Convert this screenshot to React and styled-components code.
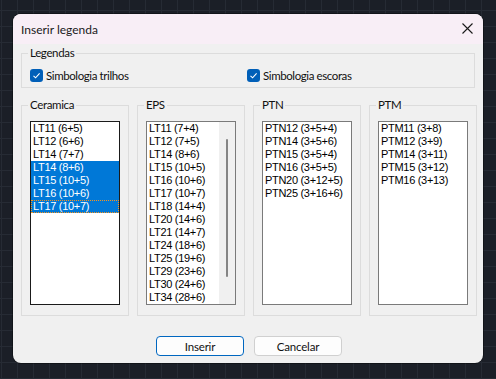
import React from 'react';
import styled, { createGlobalStyle } from 'styled-components';

const GlobalStyle = createGlobalStyle`
  html, body {
    margin: 0;
    padding: 0;
  }
  body {
    width: 496px;
    height: 379px;
    overflow: hidden;
    background-color: #1b1f27;
    background-image:
      linear-gradient(to right, #262b34 1px, transparent 1px),
      linear-gradient(to bottom, #262b34 1px, transparent 1px);
    background-size: 16px 16px;
    background-position: 1px 10px;
    font-family: Lato, "Noto Sans", sans-serif;
  }
`;

const ceramica = [
  { label: 'LT11 (6+5)' },
  { label: 'LT12 (6+6)' },
  { label: 'LT14 (7+7)' },
  { label: 'LT14 (8+6)', selected: true },
  { label: 'LT15 (10+5)', selected: true },
  { label: 'LT16 (10+6)', selected: true },
  { label: 'LT17 (10+7)', selected: true, focus: true },
];

const eps = [
  'LT11 (7+4)', 'LT12 (7+5)', 'LT14 (8+6)', 'LT15 (10+5)', 'LT16 (10+6)',
  'LT17 (10+7)', 'LT18 (14+4)', 'LT20 (14+6)', 'LT21 (14+7)', 'LT24 (18+6)',
  'LT25 (19+6)', 'LT29 (23+6)', 'LT30 (24+6)', 'LT34 (28+6)',
].map(label => ({ label }));

const ptn = [
  'PTN12 (3+5+4)', 'PTN14 (3+5+6)', 'PTN15 (3+5+4)', 'PTN16 (3+5+5)',
  'PTN20 (3+12+5)', 'PTN25 (3+16+6)',
].map(label => ({ label }));

const ptm = [
  'PTM11 (3+8)', 'PTM12 (3+9)', 'PTM14 (3+11)', 'PTM15 (3+12)', 'PTM16 (3+13)',
].map(label => ({ label }));

const App = () => {
  return (
    <>
      <GlobalStyle />
      <Page>
        <Window>
          <TitleBar>
            <span>Inserir legenda</span>
            <svg width="11" height="11" viewBox="0 0 11 11">
              <path d="M0.5 0.5 L10.5 10.5 M10.5 0.5 L0.5 10.5" stroke="#1a1a1a" strokeWidth="1.1" fill="none" />
            </svg>
          </TitleBar>

          <Body>
            <Group $wide>
              <Legend>Legendas</Legend>
              <CheckRow>
                <CheckItem><CheckBox /> Simbologia trilhos</CheckItem>
                <CheckItem><CheckBox /> Simbologia escoras</CheckItem>
              </CheckRow>
            </Group>

            <ListsRow>
              <ListGroup title="Ceramica" items={ceramica} focused />
              <ListGroup title="EPS" items={eps} scroll />
              <ListGroup title="PTN" items={ptn} />
              <ListGroup title="PTM" items={ptm} />
            </ListsRow>

            <Footer>
              <Button $primary>Inserir</Button>
              <Button>Cancelar</Button>
            </Footer>
          </Body>
        </Window>
      </Page>
    </>
  );
};

const CheckBox = () => (
  <Box>
    <svg width="9" height="9" viewBox="0 0 9 9">
      <path d="M1.5 4.8 L3.6 6.8 L7.6 2.4" stroke="#fff" strokeWidth="1.1" fill="none" />
    </svg>
  </Box>
);

const ListGroup = ({ title, items, focused, scroll }) => (
  <Group $list>
    <Legend>{title}</Legend>
    <ListBox $focused={focused}>
      <Items>
        {items.map((item, index) => (
          <Item key={index} $selected={item.selected} $focus={item.focus}>
            {item.label}
          </Item>
        ))}
      </Items>
      {scroll && (
        <ScrollTrack>
          <Thumb />
        </ScrollTrack>
      )}
    </ListBox>
  </Group>
);

export default App;

const Page = styled.div`
  padding: 14px 0 0 13px;
`;

const Window = styled.div`
  width: 470px;
  height: 349px;
  border-radius: 8px;
  overflow: hidden;
  background: #f0f0f0;
  display: flex;
  flex-direction: column;
  box-shadow: 0 0 0 1px rgba(0, 0, 0, 0.35);
`;

const TitleBar = styled.div`
  height: 30px;
  flex-shrink: 0;
  background: #f8eef6;
  display: flex;
  align-items: center;
  justify-content: space-between;
  padding: 0 10px 0 8px;
  font-size: 12px;
  color: #1a1a1a;

  & > svg {
    margin-top: -1px;
  }
`;

const Body = styled.div`
  flex: 1;
  padding: 2px 6px 0 8px;
  display: flex;
  flex-direction: column;
`;

const Group = styled.fieldset`
  margin: 0;
  min-width: 0;
  border: 1px solid #dcdcdc;
  padding: ${props => (props.$list ? '0 8px 10px' : '0 8px 4px')};
  margin-right: ${props => (props.$wide ? '2px' : '0')};
`;

const Legend = styled.legend`
  padding: 0 2px;
  margin-left: -2px;
  font-size: 11.5px;
  letter-spacing: -0.35px;
  line-height: 14px;
  color: #111;
`;

const CheckRow = styled.div`
  display: grid;
  grid-template-columns: 217px 1fr;
  margin-top: 7px;
  height: 16px;
`;

const CheckItem = styled.div`
  display: flex;
  align-items: center;
  gap: 3px;
  font-size: 11.5px;
  letter-spacing: -0.4px;
  color: #111;
`;

const Box = styled.span`
  width: 13px;
  height: 13px;
  box-sizing: border-box;
  border-radius: 3px;
  background: #005fb8;
  display: flex;
  align-items: center;
  justify-content: center;
`;

const ListsRow = styled.div`
  display: grid;
  grid-template-columns: repeat(4, 108px);
  gap: 8px;
  margin-top: 10px;
`;

const ListBox = styled.div`
  margin-top: 9px;
  height: 184px;
  box-sizing: border-box;
  border: 1px solid ${props => (props.$focused ? '#1a1a1a' : '#7a7a7a')};
  background: #fff;
  display: flex;
  overflow: hidden;
`;

const Items = styled.div`
  flex: 1;
  min-width: 0;
  overflow: hidden;
`;

const Item = styled.div`
  height: 13px;
  line-height: 13px;
  padding-left: 2px;
  font-family: "Liberation Sans", Arial, sans-serif;
  font-size: 11px;
  letter-spacing: -0.3px;
  white-space: nowrap;
  background: ${props => (props.$selected ? '#0078d7' : 'transparent')};
  color: ${props => (props.$selected ? '#fff' : '#000')};
  outline: ${props => (props.$focus ? '1px dotted #f7941d' : 'none')};
  outline-offset: -1px;
`;

const ScrollTrack = styled.div`
  width: 16px;
  flex-shrink: 0;
  background: #f0f0f0;
  display: flex;
  justify-content: center;
  padding-top: 17px;
  box-sizing: border-box;
`;

const Thumb = styled.div`
  width: 2px;
  height: 138px;
  border-radius: 1px;
  background: #858585;
`;

const Footer = styled.div`
  display: flex;
  justify-content: center;
  gap: 10px;
  margin-top: 20px;
`;

const Button = styled.button`
  width: 88px;
  height: 20px;
  padding: 0;
  border-radius: 4px;
  background: #fdfdfd;
  border: 1px solid ${props => (props.$primary ? '#0067c0' : '#d0d0d0')};
  font-family: Lato, "Noto Sans", sans-serif;
  font-size: 11.5px;
  letter-spacing: -0.2px;
  color: #111;
`;
